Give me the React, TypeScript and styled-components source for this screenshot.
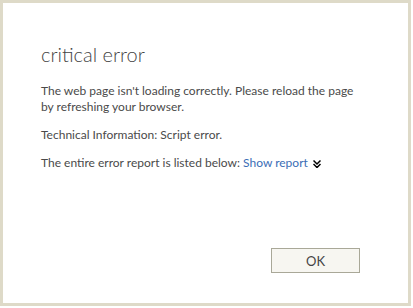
import React from "react";
import styled, { createGlobalStyle } from "styled-components";

const Global = createGlobalStyle`
  html, body { margin: 0; padding: 0; background: #ffffff; }
  body { width: 413px; height: 308px; overflow: hidden; font-family: "Lato", "Noto Sans", sans-serif; }
`;

const Dialog = styled.div`
  box-sizing: border-box;
  width: 411px;
  height: 306px;
  border: 3px solid #dedac8;
  background: #ffffff;
  padding: 36px 37px 30px 38px;
  display: flex;
  flex-direction: column;
`;

const Title = styled.h1`
  margin: 0 0 14px 0;
  font-family: "Lato", sans-serif;
  font-weight: 300;
  font-size: 20px;
  line-height: 30px;
  color: #444444;
`;

const Para = styled.p`
  margin: 0 0 12px 0;
  max-width: 320px;
  font-size: 12px;
  line-height: 16px;
  color: #4a4a4a;
`;

const Link = styled.a`
  color: #3b6db5;
  text-decoration: none;
`;

const Chevron = styled.svg`
  margin-left: 5px;
  vertical-align: -1px;
`;

const Footer = styled.div`
  margin-top: auto;
  display: flex;
  justify-content: flex-end;
  padding-right: 11px;
`;

const Button = styled.button`
  box-sizing: border-box;
  width: 89px;
  height: 25px;
  border: 1px solid #a9a898;
  background: #f7f6f1;
  color: #444444;
  font-family: "Lato", sans-serif;
  font-size: 13px;
  padding: 0;
`;

export default function App() {
  return (
    <>
      <Global />
      <Dialog>
        <Title>critical error</Title>
        <Para>
          The web page isn't loading correctly. Please reload the page by refreshing your browser.
        </Para>
        <Para>Technical Information: Script error.</Para>
        <Para>
          The entire error report is listed below: <Link href="#">Show report</Link>
          <Chevron width="8" height="8" viewBox="0 0 8 8">
            <path d="M0.5 0.5 L4 4 L7.5 0.5 M0.5 4 L4 7.5 L7.5 4" stroke="#000" strokeWidth="1.5" fill="none" />
          </Chevron>
        </Para>
        <Footer>
          <Button>OK</Button>
        </Footer>
      </Dialog>
    </>
  );
}
